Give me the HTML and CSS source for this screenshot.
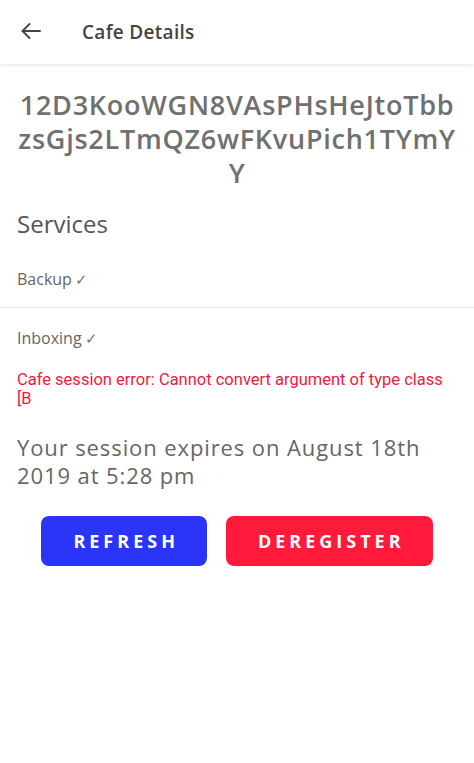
FILE: index.html
```html
<!DOCTYPE html>
<html lang="en">
<head>
  <meta charset="UTF-8" />
  <meta name="viewport" content="width=device-width, initial-scale=1.0"/>
  <title>Cafe Details</title>
  <link rel="stylesheet" href="styles.css">
</head>
<body>
  <div class="toolbar">
    <button class="back" aria-label="Back">
      <svg width="24" height="24" viewBox="0 0 24 24" fill="none" stroke="#444" stroke-width="1.9" stroke-linecap="round" stroke-linejoin="round">
        <path d="M21 12H3.5"/>
        <path d="M10.5 5L3.5 12l7 7"/>
      </svg>
    </button>
    <div class="title">Cafe Details</div>
  </div>

  <div class="content">
    <div class="peer-id">12D3KooWGN8VAsPHsHeJtoTbbzsGjs2LTmQZ6wFKvuPich1TYmYY</div>

    <div class="section-title">Services</div>

    <div class="service first">Backup<span class="check">✓</span></div>
    <div class="divider"></div>
    <div class="service">Inboxing<span class="check">✓</span></div>

    <div class="error">Cafe session error: Cannot convert argument of type class [B</div>

    <div class="expires">Your session expires on August 18th 2019 at 5:28 pm</div>

    <div class="actions">
      <button class="btn refresh">REFRESH</button>
      <button class="btn deregister">DEREGISTER</button>
    </div>
  </div>
</body>
</html>
```

FILE: styles.css
```css
body {
  margin: 0;
  background: #fff;
  font-family: 'Open Sans', 'Noto Sans', sans-serif;
  color: #666;
}

.toolbar {
  height: 64px;
  display: flex;
  align-items: center;
  padding-left: 19px;
  box-shadow: 0 1px 4px rgba(0,0,0,0.12);
  position: relative;
}

.back {
  background: none;
  border: none;
  padding: 0;
  width: 24px;
  height: 24px;
  margin-top: -2px;
}

.title {
  margin-left: 39px;
  font-size: 19px;
  font-weight: 600;
  letter-spacing: 0.3px;
  color: #444;
}

.content {
  padding: 0 17px;
}

.peer-id {
  margin-top: 24px;
  text-align: center;
  font-size: 27px;
  font-weight: 600;
  letter-spacing: 0.75px;
  line-height: 34px;
  color: #707070;
  word-break: break-all;
}

.section-title {
  margin-top: 19px;
  font-size: 24px;
  line-height: 30px;
  color: #555;
}

.service {
  font-size: 16px;
  line-height: 20px;
  color: #666;
  padding: 20px 0 18px;
}

.service.first {
  padding-top: 30px;
}

.check {
  margin-left: 3px;
  font-size: 15px;
  color: #777;
}

.divider {
  height: 1px;
  background: #e2e2e2;
  margin: 0 -17px;
}

.error {
  margin-top: 4px;
  font-family: 'Roboto', sans-serif;
  font-size: 16.5px;
  line-height: 19px;
  color: #f5173f;
}

.expires {
  margin-top: 25px;
  font-size: 22px;
  letter-spacing: 0.9px;
  line-height: 28px;
  color: #666;
}

.actions {
  display: flex;
  justify-content: center;
  gap: 19px;
  margin-top: 27px;
}

.btn {
  height: 50px;
  padding: 0 28px 0 32px;
  border: none;
  border-radius: 8px;
  color: #fff;
  font-family: 'Open Sans', sans-serif;
  font-size: 18px;
  font-weight: 700;
  letter-spacing: 4px;
}

.refresh {
  background: #2a35f7;
}

.deregister {
  background: #ff1a3b;
}
```
